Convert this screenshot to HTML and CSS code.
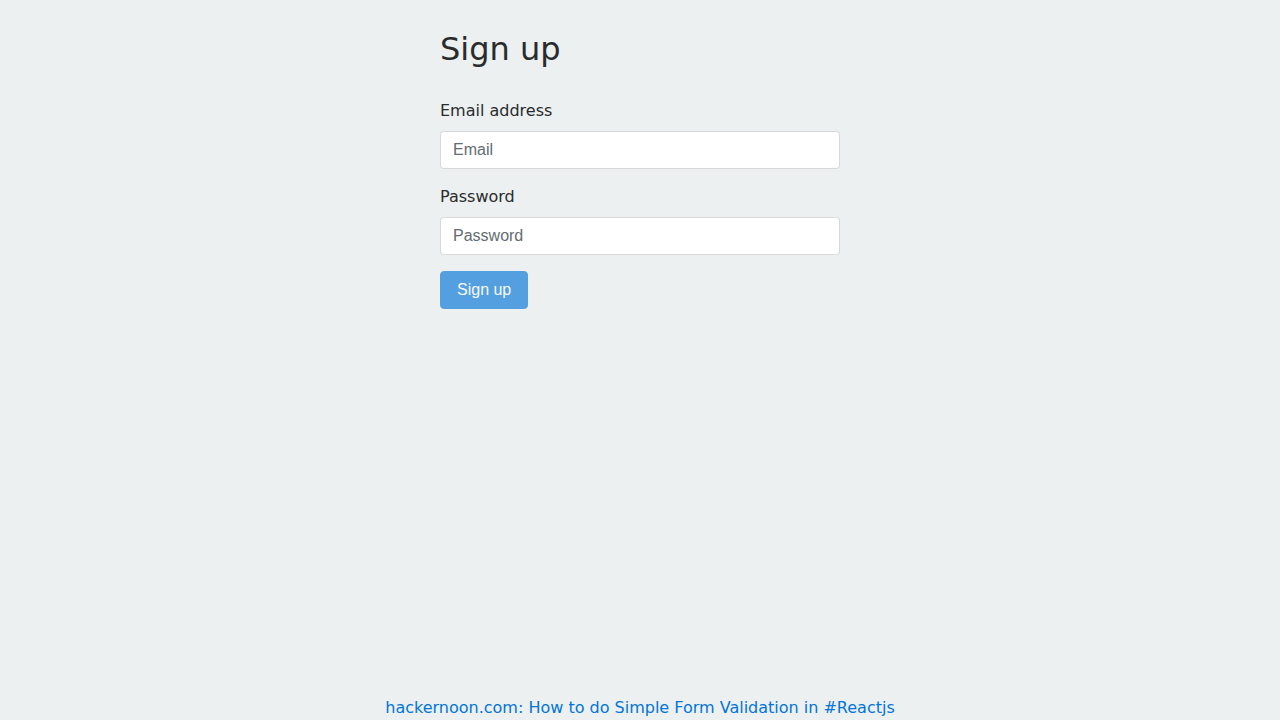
FILE: index.html
```html
<!DOCTYPE html>
<html lang="en">
<head>
<meta charset="utf-8">
<title>Sign up</title>
<link rel="stylesheet" href="styles.css">
</head>
<body>
<div class="page">
  <main class="container">
    <h1 class="title">Sign up</h1>
    <form class="form">
      <div class="form-group">
        <label class="label" for="email">Email address</label>
        <input class="input" id="email" type="email" placeholder="Email">
      </div>
      <div class="form-group">
        <label class="label" for="password">Password</label>
        <input class="input" id="password" type="password" placeholder="Password">
      </div>
      <button class="btn" type="submit" disabled>Sign up</button>
    </form>
  </main>
  <footer class="footer">
    <a class="link" href="#">hackernoon.com: How to do Simple Form Validation in #Reactjs</a>
  </footer>
</div>
</body>
</html>
```

FILE: styles.css
```css
* { box-sizing: border-box; }
html, body { margin: 0; padding: 0; }
body {
  background: #ecf0f1;
  color: #292b2c;
  font-family: "DejaVu Sans", sans-serif;
  font-size: 16px;
  line-height: 1.5;
}
.page {
  min-height: 100vh;
  height: 720px;
  display: flex;
  flex-direction: column;
}
.container {
  width: 400px;
  margin: 0 auto;
  padding-top: 32px;
  flex: 1;
}
.title {
  margin: 0 0 32px 0;
  font-size: 32px;
  font-weight: 500;
  line-height: 1.1;
}
.form-group { margin-bottom: 16px; display: flex; flex-direction: column; }
.label { margin-bottom: 8px; display: block; }
.input {
  display: block;
  width: 100%;
  height: 38px;
  padding: 8px 12px;
  font-family: "Liberation Sans", Arial, sans-serif;
  font-size: 16px;
  line-height: 1.25;
  color: #464a4c;
  background: #fff;
  border: 1px solid rgba(0,0,0,.15);
  border-radius: 4px;
}
.input::placeholder { color: #636c72; opacity: 1; }
.btn {
  display: inline-block;
  height: 38px;
  padding: 8px 16px;
  font-family: "Liberation Sans", Arial, sans-serif;
  font-size: 16px;
  line-height: 1.25;
  color: #fff;
  background: #0275d8;
  border: 1px solid #0275d8;
  border-radius: 4px;
  opacity: .65;
}
.footer {
  text-align: center;
}
.link {
  color: #0275d8;
  text-decoration: none;
}
```
